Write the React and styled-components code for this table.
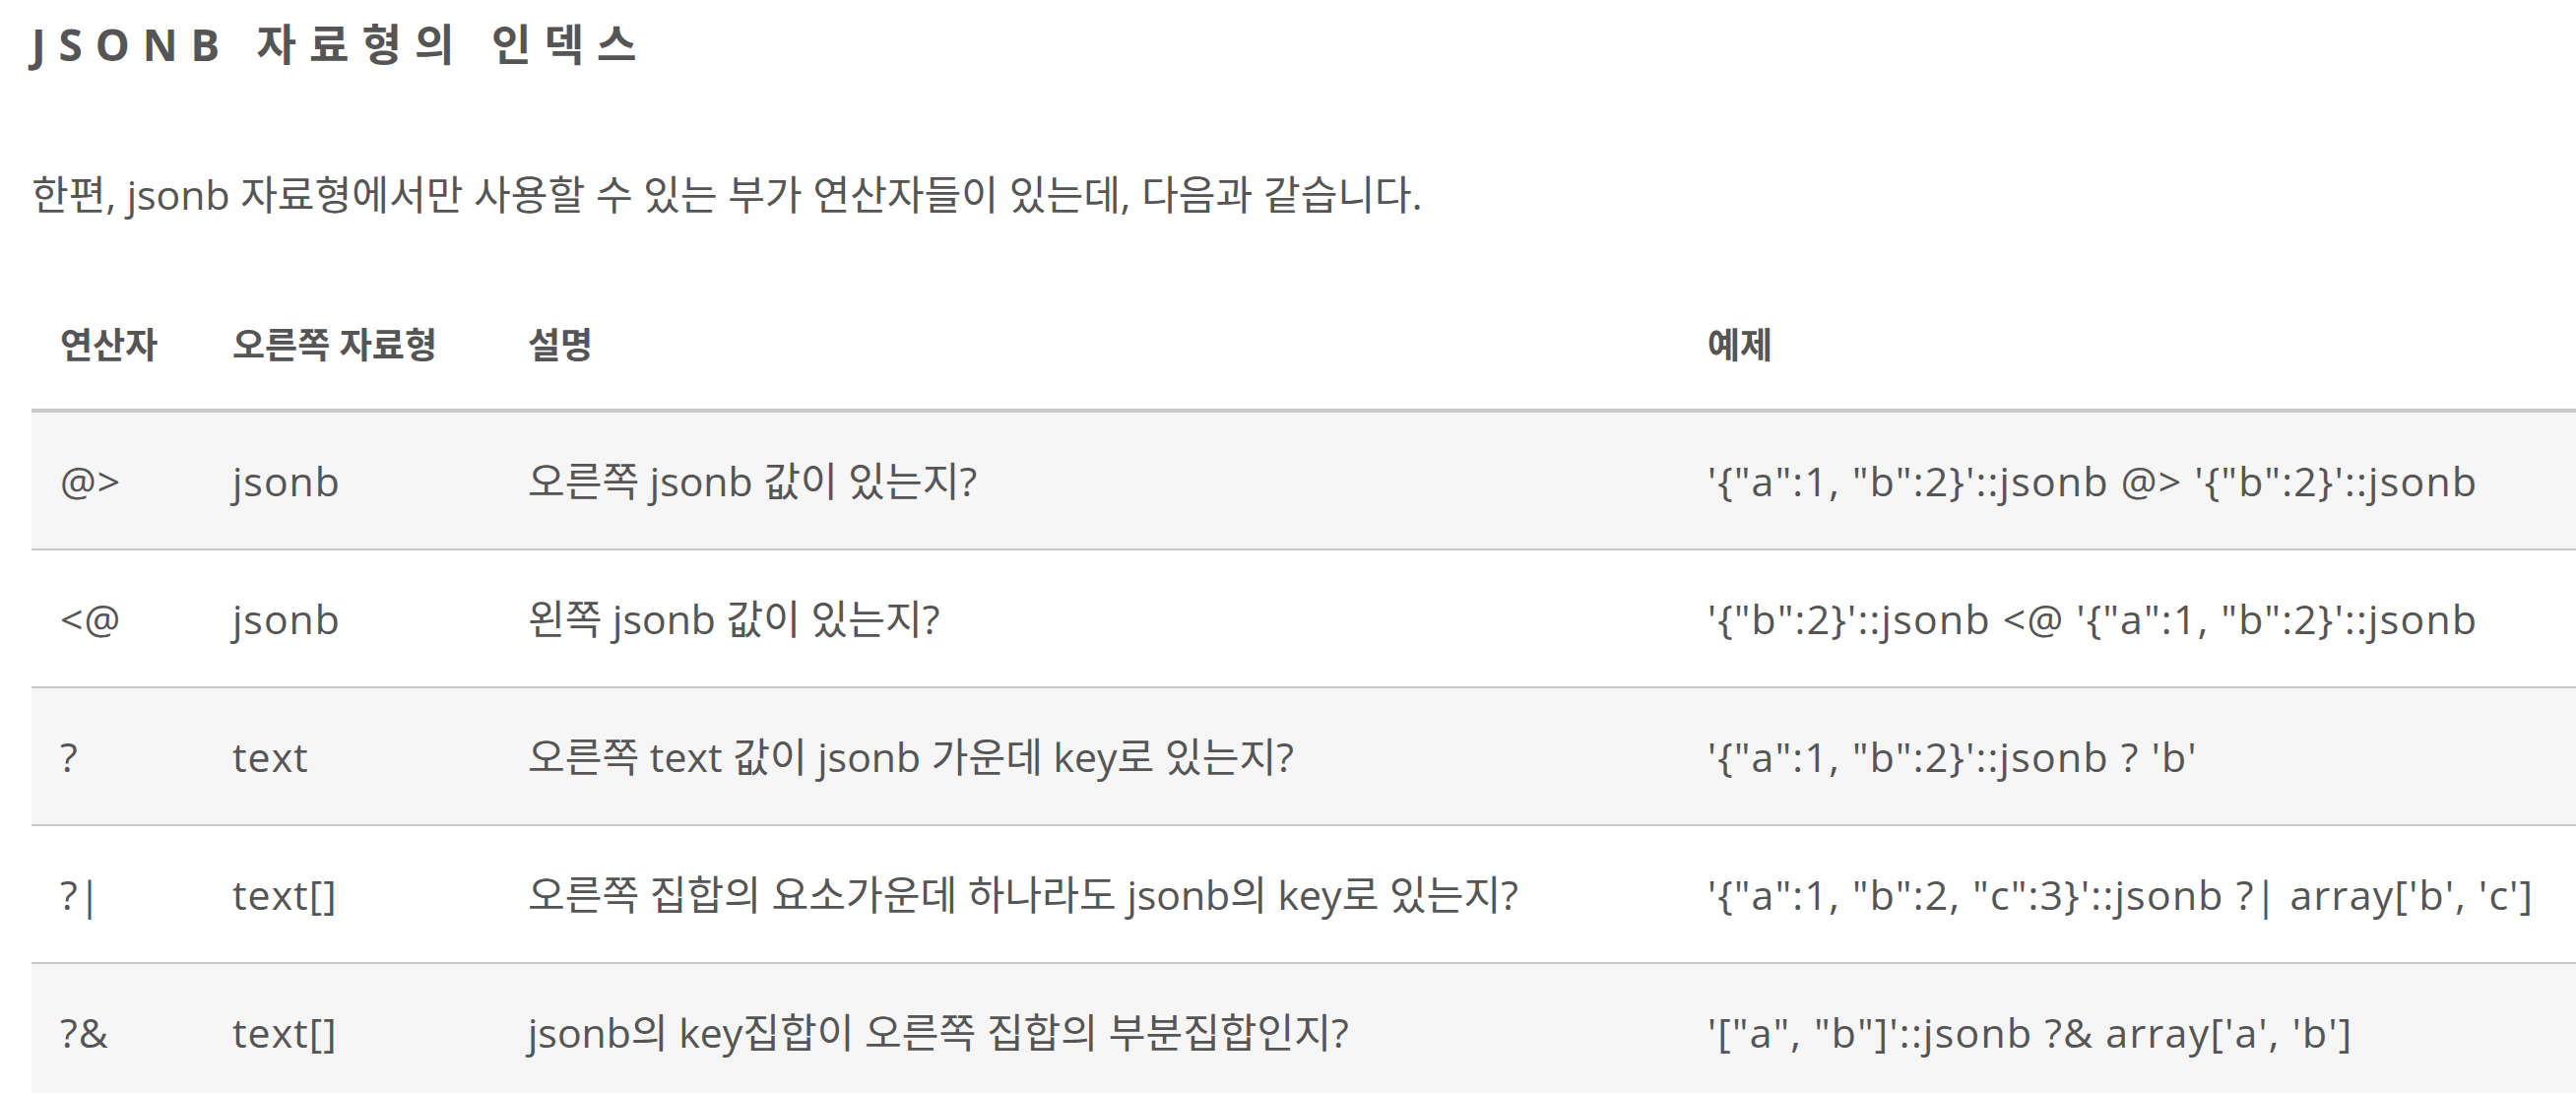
import React from 'react'
import styled, { createGlobalStyle } from 'styled-components'

const GlobalStyle = createGlobalStyle`
    html, body {
        margin: 0;
        padding: 0;
        background: #fff;
    }
    body {
        font-family: "Open Sans", "Noto Sans CJK KR", sans-serif;
        color: #555;
    }
`

const Page = styled.div`
    padding-left: 32px;
    overflow: hidden;
`

const Title = styled.h2`
    margin: 0;
    padding-top: 20px;
    font-size: 44px;
    line-height: 50px;
    font-weight: 700;
    letter-spacing: 13px;
    color: #555;
`

const Intro = styled.p`
    margin: 97px 0 60px;
    font-size: 41px;
    line-height: 60px;
    font-weight: 400;
`

const Table = styled.table`
    width: 100%;
    border-collapse: collapse;
    table-layout: fixed;
`

// widths are content widths, the 29px left padding comes on top
const HeadCell = styled.th`
    width: ${props => props.$w ? props.$w + 'px' : 'auto'};
    padding: 39px 0 39px 29px;
    font-size: 36px;
    line-height: 50px;
    font-weight: 700;
    text-align: left;
    border-bottom: 4px solid #c8c8c8;
`

const Row = styled.tr`
    background: ${props => props.$shaded ? '#f6f6f6' : '#fff'};
    border-bottom: 2px solid #c8c8c8;
`

const Cell = styled.td`
    padding: 44px 0 44px 29px;
    font-size: 41px;
    line-height: 50px;
    letter-spacing: ${props => props.$spacing || 0}px;
    white-space: nowrap;
`

const columns = [
    { label: '연산자', w: 146, spacing: 1 },
    { label: '오른쪽 자료형', w: 271, spacing: 1 },
    { label: '설명', w: 1169, spacing: 0 },
    { label: '예제', spacing: 1.3 },
]

const rows = [
    ['@>', 'jsonb', '오른쪽 jsonb 값이 있는지?', `'{"a":1, "b":2}'::jsonb @> '{"b":2}'::jsonb`],
    ['<@', 'jsonb', '왼쪽 jsonb 값이 있는지?', `'{"b":2}'::jsonb <@ '{"a":1, "b":2}'::jsonb`],
    ['?', 'text', '오른쪽 text 값이 jsonb 가운데 key로 있는지?', `'{"a":1, "b":2}'::jsonb ? 'b'`],
    ['?|', 'text[]', '오른쪽 집합의 요소가운데 하나라도 jsonb의 key로 있는지?', `'{"a":1, "b":2, "c":3}'::jsonb ?| array['b', 'c']`],
    ['?&', 'text[]', 'jsonb의 key집합이 오른쪽 집합의 부분집합인지?', `'["a", "b"]'::jsonb ?& array['a', 'b']`],
]

function App() {
    return (
        <Page>
            <GlobalStyle />
            <Title>JSONB 자료형의 인덱스</Title>
            <Intro>한편, jsonb 자료형에서만 사용할 수 있는 부가 연산자들이 있는데, 다음과 같습니다.</Intro>
            <Table>
                <thead>
                    <tr>
                        {columns.map(col => (
                            <HeadCell key={col.label} $w={col.w}>{col.label}</HeadCell>
                        ))}
                    </tr>
                </thead>
                <tbody>
                    {rows.map((row, i) => (
                        <Row key={i} $shaded={i % 2 === 0}>
                            {row.map((text, j) => (
                                <Cell key={j} $spacing={columns[j].spacing}>{text}</Cell>
                            ))}
                        </Row>
                    ))}
                </tbody>
            </Table>
        </Page>
    )
}

export default App
